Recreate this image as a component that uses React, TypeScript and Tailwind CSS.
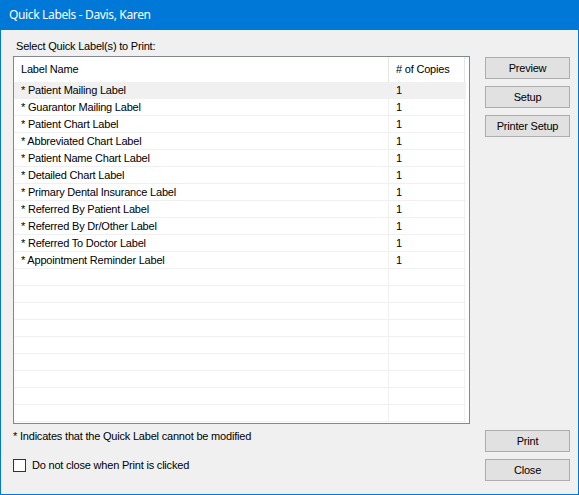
const labels = [
  'Patient Mailing Label',
  'Guarantor Mailing Label',
  'Patient Chart Label',
  'Abbreviated Chart Label',
  'Patient Name Chart Label',
  'Detailed Chart Label',
  'Primary Dental Insurance Label',
  'Referred By Patient Label',
  'Referred By Dr/Other Label',
  'Referred To Doctor Label',
  'Appointment Reminder Label',
]

const emptyRows = Array.from({ length: 9 }, (_, i) => i)

function WinButton({ children, className = '' }: { children: React.ReactNode; className?: string }) {
  return (
    <button
      className={`h-[22px] w-[85px] border border-[#adadad] bg-[#e1e1e1] text-[11px] leading-none tracking-[-0.2px] text-black ${className}`}
    >
      {children}
    </button>
  )
}

export default function App() {
  return (
    <div className="flex h-[495px] w-[579px] flex-col border-x border-b border-[#0078d7] bg-[#f0f0f0] font-['Liberation_Sans',Arial,sans-serif] text-[11px] tracking-[-0.2px] text-black">
      <div className="flex h-[30px] shrink-0 items-center bg-[#0078d7] pl-[8px] font-['Noto_Sans',sans-serif] text-[12px] tracking-[-0.35px] text-white">
        Quick Labels - Davis, Karen
      </div>

      <div className="flex flex-1 pl-[12px]">
        <div className="flex w-[457px] flex-col">
          <div className="mt-[10px] pl-[3px] leading-[13px]">Select Quick Label(s) to Print:</div>

          <div className="mt-[3px] h-[368px] overflow-hidden border border-[#828790] bg-white">
            <div className="flex h-[25px] items-center">
              <div className="flex h-full w-[375px] items-center border-r border-[#e5e5e5] pl-[7px]">Label Name</div>
              <div className="flex h-full w-[76px] items-center border-r border-[#e5e5e5] pl-[7px]">
                # of Copies
              </div>
            </div>

            {labels.map((label, i) => (
              <div
                key={label}
                className={`flex h-[17px] w-[452px] border-b border-[#f0f0f0] ${i === 0 ? 'bg-[#f0f0f0]' : ''}`}
              >
                <div className="flex w-[375px] items-center border-r border-[#f0f0f0] pl-[7px] pt-[1px]">* {label}</div>
                <div className="flex w-[76px] items-center border-r border-[#f0f0f0] pl-[7px] pt-[1px]">1</div>
              </div>
            ))}

            {emptyRows.map((i) => (
              <div key={i} className="flex h-[17px] w-[452px] border-b border-[#f0f0f0]">
                <div className="w-[375px] border-r border-[#f0f0f0]" />
                <div className="w-[76px] border-r border-[#f0f0f0]" />
              </div>
            ))}
          </div>

          <div className="mt-[6px] leading-[13px]">* Indicates that the Quick Label cannot be modified</div>

          <label className="mt-[16px] flex items-center">
            <span className="h-[13px] w-[13px] border border-[#333333] bg-white" />
            <span className="ml-[6px] leading-[13px]">Do not close when Print is clicked</span>
          </label>
        </div>

        <div className="ml-[15px] flex flex-col pb-[13px] pt-[27px]">
          <WinButton>Preview</WinButton>
          <WinButton className="mt-[7px]">Setup</WinButton>
          <WinButton className="mt-[7px]">Printer Setup</WinButton>
          <WinButton className="mt-auto">Print</WinButton>
          <WinButton className="mt-[7px]">Close</WinButton>
        </div>
      </div>
    </div>
  )
}
